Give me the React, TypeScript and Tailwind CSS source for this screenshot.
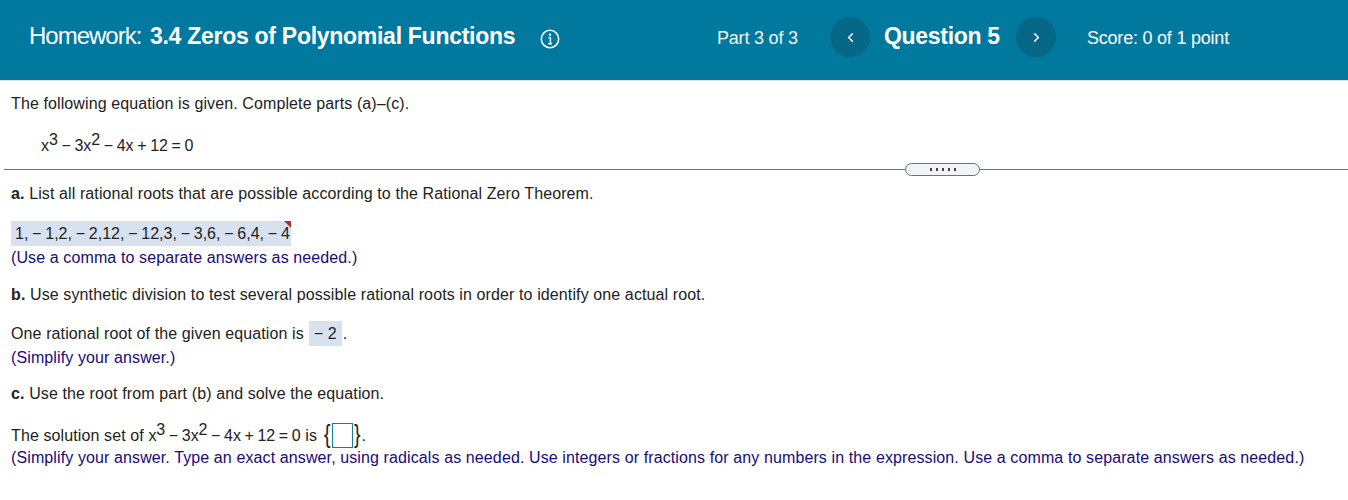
import React from 'react'
import { ChevronLeft, ChevronRight } from 'lucide-react'

const Sup: React.FC<{ children: React.ReactNode }> = ({ children }) => (
  <span className="text-[16px] leading-[0] relative -top-[6px]">{children}</span>
)

const Equation: React.FC = () => (
  <span className="tracking-[-0.1px] [word-spacing:-0.6px]">
    x<Sup>3</Sup> − 3x<Sup>2</Sup> − 4x + 12 = 0
  </span>
)

const Hint: React.FC<{ children: React.ReactNode }> = ({ children }) => (
  <div className="text-[#1a0a7a] leading-[20px]">{children}</div>
)

const NavButton: React.FC<{ children: React.ReactNode }> = ({ children }) => (
  <div className="w-[40px] h-[40px] rounded-full bg-[#066787] flex items-center justify-center text-white">
    {children}
  </div>
)

export default function App() {
  return (
    <div className="w-[1348px] h-[500px] bg-white overflow-hidden font-['Liberation_Sans',Arial,sans-serif] text-[16px] tracking-[0.11px] text-[#222]">
      {/* header */}
      <div className="h-[81px] bg-[#01799e] border-b border-[#dddddd] text-white flex items-center pb-[6px]">
        <div className="w-[29px]" />
        <div className="text-[24px] tracking-[-1px] w-[121px] -mt-[2px]">Homework:</div>
        <div className="text-[23px] font-bold tracking-[-0.28px] w-[390px] whitespace-nowrap -mt-[1px]">3.4 Zeros of Polynomial Functions</div>
        <svg width="20" height="20" viewBox="0 0 20 20" className="mt-[4px]" fill="none" stroke="white">
          <circle cx="10" cy="10" r="8.7" strokeWidth="1.5" />
          <circle cx="10" cy="5.8" r="1.2" fill="white" stroke="none" />
          <path d="M8.4 8.6h2v6M8.2 14.8h3.8" strokeWidth="1.4" />
        </svg>
        <div className="w-[157px]" />
        <div className="w-[113px] text-[18px] tracking-[-0.2px] mt-[3px] whitespace-nowrap text-[#eef4f7]">Part 3 of 3</div>
        <NavButton><ChevronLeft size={15} strokeWidth={2.5} /></NavButton>
        <div className="w-[146px] pl-[14px] text-[23px] font-bold tracking-[-0.3px] whitespace-nowrap -mt-[1px]">Question 5</div>
        <NavButton><ChevronRight size={15} strokeWidth={2.5} /></NavButton>
        <div className="ml-[31px] text-[18px] tracking-[-0.22px] mt-[3px] whitespace-nowrap">Score: 0 of 1 point</div>
      </div>

      {/* question stem */}
      <div className="pl-[11px] pt-[13px] h-[88px]">
        <div className="leading-[20px]">The following equation is given. Complete parts (a)–(c).</div>
        <div className="pl-[30px] mt-[22px] leading-[20px]">
          <Equation />
        </div>
      </div>

      {/* divider */}
      <div className="h-[1px] ml-[4px] bg-[#6b7078] relative">
        <div className="absolute left-[901px] -top-[6px] w-[75px] h-[13px] rounded-[7px] border border-[#6b7078] bg-[#f3f4f7] flex items-center justify-center gap-[4px]">
          {[0, 1, 2, 3, 4].map(i => (
            <span key={i} className="w-[2px] h-[3px] bg-[#444]" />
          ))}
        </div>
      </div>

      {/* parts */}
      <div className="pl-[11px] pt-[14px]">
        <div className="leading-[20px]"><b>a.</b> List all rational roots that are possible according to the Rational Zero Theorem.</div>

        <div className="mt-[17px] flex">
          <div className="relative h-[25px] w-[280px] bg-[#d8e1f0] pl-[4px] leading-[25px] tracking-normal [word-spacing:-0.67px] whitespace-nowrap">
            1, − 1,2, − 2,12, − 12,3, − 3,6, − 6,4, − 4
            <span className="absolute top-0 right-0 w-0 h-0 border-t-[7px] border-l-[7px] border-t-[#b52a2a] border-l-transparent" />
          </div>
        </div>
        <div className="mt-[2px]"><Hint>(Use a comma to separate answers as needed.)</Hint></div>

        <div className="mt-[17px] leading-[20px]"><b>b.</b> Use synthetic division to test several possible rational roots in order to identify one actual root.</div>

        <div className="mt-[16px] flex items-center h-[25px] whitespace-nowrap">
          <span className="mt-[1px]">One rational root of the given equation is</span>
          <span className="ml-[5px] w-[33px] h-[25px] bg-[#d8e1f0] text-center leading-[25px]">− 2</span>
          <span className="ml-[1px] mt-[1px]">.</span>
        </div>
        <div className="mt-[2px]"><Hint>(Simplify your answer.)</Hint></div>

        <div className="mt-[16px] leading-[20px]"><b>c.</b> Use the root from part (b) and solve the equation.</div>

        <div className="mt-[19px] flex items-center h-[25px] whitespace-nowrap">
          <span className="mt-[1px]">The solution set of <Equation /> is</span>
          <span className="ml-[6px] text-[26px] font-light leading-none -mt-[3px] scale-x-75">{'{'}</span>
          <span className="w-[21px] h-[25px] border border-[#1a7a9c] bg-white" />
          <span className="text-[26px] font-light leading-none -mt-[3px] scale-x-75">{'}'}</span>
          <span className="mt-[1px]">.</span>
        </div>
        <Hint>(Simplify your answer. Type an exact answer, using radicals as needed. Use integers or fractions for any numbers in the expression. Use a comma to separate answers as needed.)</Hint>
      </div>
    </div>
  )
}
